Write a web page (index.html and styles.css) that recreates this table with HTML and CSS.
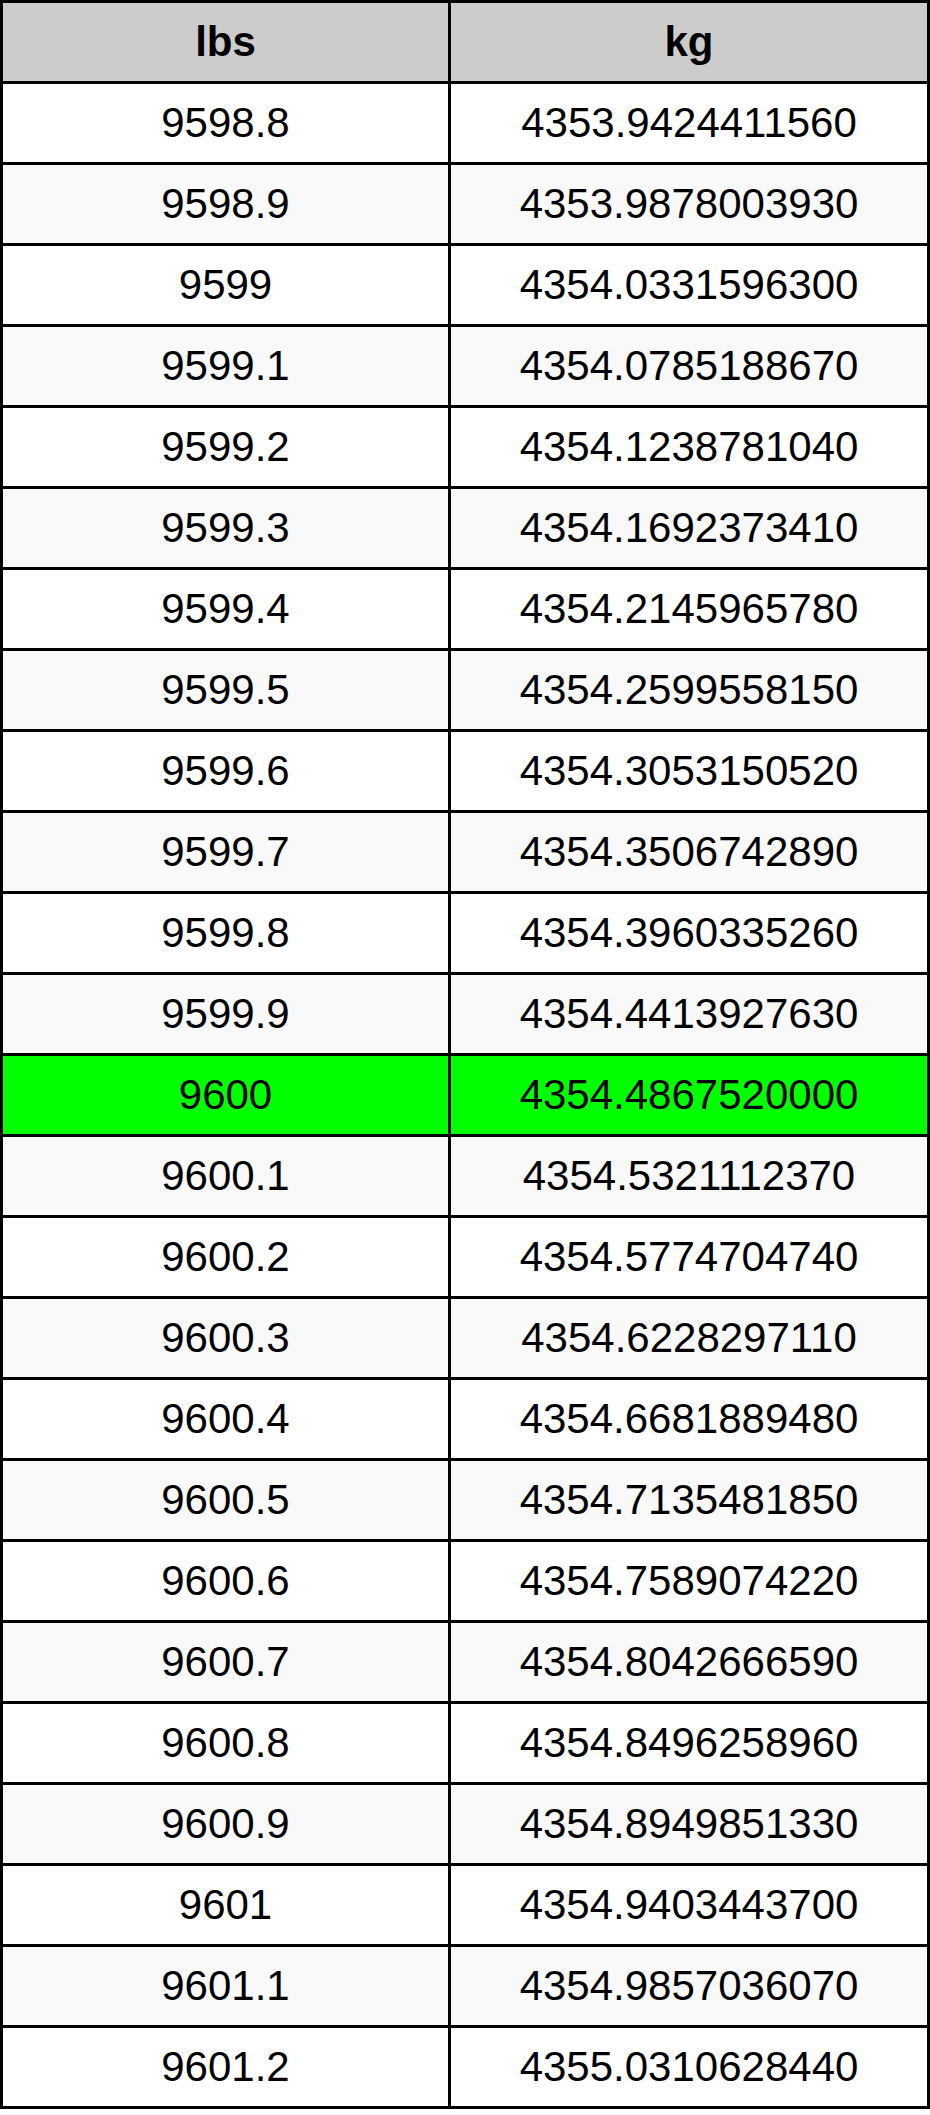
FILE: index.html
```html
<!DOCTYPE html>
<html lang="en">
<head>
<meta charset="utf-8">
<title>lbs to kg</title>
<link rel="stylesheet" href="styles.css">
</head>
<body>
<table class="conv">
<colgroup><col class="c1"><col class="c2"></colgroup>
<thead>
<tr><th>lbs</th><th>kg</th></tr>
</thead>
<tbody>
<tr><td>9598.8</td><td>4353.9424411560</td></tr>
<tr class="alt"><td>9598.9</td><td>4353.9878003930</td></tr>
<tr><td>9599</td><td>4354.0331596300</td></tr>
<tr class="alt"><td>9599.1</td><td>4354.0785188670</td></tr>
<tr><td>9599.2</td><td>4354.1238781040</td></tr>
<tr class="alt"><td>9599.3</td><td>4354.1692373410</td></tr>
<tr><td>9599.4</td><td>4354.2145965780</td></tr>
<tr class="alt"><td>9599.5</td><td>4354.2599558150</td></tr>
<tr><td>9599.6</td><td>4354.3053150520</td></tr>
<tr class="alt"><td>9599.7</td><td>4354.3506742890</td></tr>
<tr><td>9599.8</td><td>4354.3960335260</td></tr>
<tr class="alt"><td>9599.9</td><td>4354.4413927630</td></tr>
<tr class="hl"><td>9600</td><td>4354.4867520000</td></tr>
<tr class="alt"><td>9600.1</td><td>4354.5321112370</td></tr>
<tr><td>9600.2</td><td>4354.5774704740</td></tr>
<tr class="alt"><td>9600.3</td><td>4354.6228297110</td></tr>
<tr><td>9600.4</td><td>4354.6681889480</td></tr>
<tr class="alt"><td>9600.5</td><td>4354.7135481850</td></tr>
<tr><td>9600.6</td><td>4354.7589074220</td></tr>
<tr class="alt"><td>9600.7</td><td>4354.8042666590</td></tr>
<tr><td>9600.8</td><td>4354.8496258960</td></tr>
<tr class="alt"><td>9600.9</td><td>4354.8949851330</td></tr>
<tr><td>9601</td><td>4354.9403443700</td></tr>
<tr class="alt"><td>9601.1</td><td>4354.9857036070</td></tr>
<tr><td>9601.2</td><td>4355.0310628440</td></tr>
</tbody>
</table>
</body>
</html>
```
FILE: styles.css
```css
html, body {
  margin: 0;
  padding: 0;
  background: #ffffff;
}
.conv {
  width: 930px;
  table-layout: fixed;
  border-collapse: separate;
  border-spacing: 3px;
  background: #000000;
  font-family: "Liberation Sans", Arial, sans-serif;
  font-size: 42px;
  color: #000000;
}
.conv .c1 { width: 445px; }
.conv .c2 { width: 476px; }
.conv th,
.conv td {
  height: 78px;
  padding: 0;
  text-align: center;
  vertical-align: middle;
  background: #ffffff;
  line-height: 1;
}
.conv th {
  background: #cccccc;
  font-weight: bold;
}
.conv tr.alt td { background: #f9f9f9; }
.conv tr.hl td { background: #00ff00; }
```
